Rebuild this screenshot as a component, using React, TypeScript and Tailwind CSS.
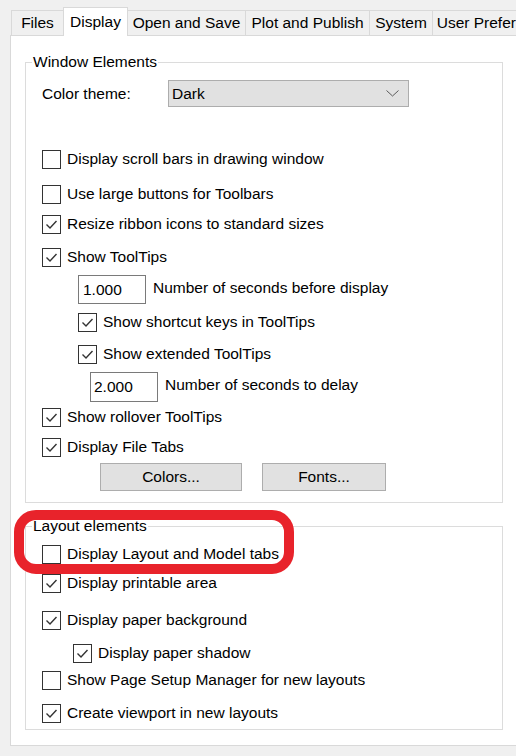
import React from 'react';

const Check: React.FC<{ checked?: boolean }> = ({ checked }) => (
  <div className="w-[19px] h-[19px] border border-[#333333] bg-white shrink-0 flex items-center justify-center">
    {checked && (
      <svg width="17" height="17" viewBox="0 0 17 17">
        <polyline points="3.5,8.5 7,12 13.5,5" fill="none" stroke="#333333" strokeWidth="1.4" />
      </svg>
    )}
  </div>
);

const Row: React.FC<{ checked?: boolean; label: string; className?: string }> = ({ checked, label, className = '' }) => (
  <div className={`h-[24px] flex items-center gap-[6px] ${className}`}>
    <Check checked={checked} />
    <span className="whitespace-nowrap">{label}</span>
  </div>
);

const tabs = [
  { name: 'Files', w: 'w-[53px]' },
  { name: 'Display', w: 'w-[65px]', active: true },
  { name: 'Open and Save', w: 'w-[119px]' },
  { name: 'Plot and Publish', w: 'w-[125px]' },
  { name: 'System', w: 'w-[64px]' },
  { name: 'User Preferences', w: 'w-[130px]' },
];

const App: React.FC = () => {
  return (
    <div className="relative w-[516px] h-[756px] overflow-hidden bg-[#f0f0f0] text-black text-[15.5px] font-['Liberation_Sans',Arial,sans-serif]">
      {/* tab strip */}
      <div className="h-[35px] flex items-end pl-[11px] relative z-10">
        {tabs.map((t, i) =>
          t.active ? (
            <div
              key={t.name}
              className={`${t.w} ${i > 0 ? '-ml-px' : ''} h-[29px] -mb-px bg-white border-t border-x border-[#d9d9d9] flex items-start justify-center pt-[2px] whitespace-nowrap shrink-0 relative z-10`}
            >
              {t.name}
            </div>
          ) : (
            <div
              key={t.name}
              className={`${t.w} ${i > 0 ? '-ml-px' : ''} h-[25px] bg-[#f0f0f0] border-t border-x border-[#d9d9d9] flex items-center justify-center whitespace-nowrap shrink-0`}
            >
              {t.name}
            </div>
          )
        )}
      </div>

      {/* panel */}
      <div className="ml-[10px] w-[540px] h-[711px] bg-white border border-[#d9d9d9] pt-[16px]">
        <fieldset className="ml-[14px] w-[478px] border border-[#dcdcdc] pb-[11px]">
          <legend className="ml-[6px] px-[1px] leading-[20px]">Window Elements</legend>
          <div className="pl-[16px]">
            <div className="mt-[8px] h-[27px] flex items-center">
              <span className="w-[126px]">Color theme:</span>
              <div className="w-[241px] h-[27px] bg-[#e1e1e1] border border-[#adadad] flex items-center justify-between pl-[3px] pr-[9px]">
                <span>Dark</span>
                <svg width="13" height="7" viewBox="0 0 13 7">
                  <polyline points="0.5,0.5 6.5,6 12.5,0.5" fill="none" stroke="#5a5a5a" strokeWidth="1" />
                </svg>
              </div>
            </div>
            <Row className="mt-[40px]" label="Display scroll bars in drawing window" />
            <Row className="mt-[11px]" label="Use large buttons for Toolbars" />
            <Row className="mt-[6px]" checked label="Resize ribbon icons to standard sizes" />
            <Row className="mt-[9px]" checked label="Show ToolTips" />
            <div className="mt-[6px] pl-[36px] flex items-center gap-[7px]">
              <div className="w-[68px] h-[29px] border border-[#7a7a7a] flex items-center pl-[4px]">1.000</div>
              <span className="whitespace-nowrap -mt-[4px]">Number of seconds before display</span>
            </div>
            <Row className="mt-[6px] pl-[36px] gap-[5px]" checked label="Show shortcut keys in ToolTips" />
            <Row className="mt-[8px] pl-[36px] gap-[5px]" checked label="Show extended ToolTips" />
            <div className="mt-[6px] pl-[48px] flex items-center gap-[7px]">
              <div className="w-[68px] h-[30px] border border-[#7a7a7a] flex items-center pl-[3px]">2.000</div>
              <span className="whitespace-nowrap -mt-[4px]">Number of seconds to delay</span>
            </div>
            <Row className="mt-[3px]" checked label="Show rollover ToolTips" />
            <Row className="mt-[6px]" checked label="Display File Tabs" />
            <div className="mt-[4px] pl-[58px] flex gap-[20px]">
              <div className="w-[142px] h-[28px] bg-[#e1e1e1] border border-[#adadad] flex items-center justify-center">Colors...</div>
              <div className="w-[124px] h-[28px] bg-[#e1e1e1] border border-[#adadad] flex items-center justify-center">Fonts...</div>
            </div>
          </div>
        </fieldset>

        <fieldset className="mt-[13px] ml-[14px] w-[478px] border border-[#dcdcdc] pb-[4px]">
          <legend className="ml-[6px] px-[1px] leading-[20px]">Layout elements</legend>
          <div className="pl-[16px]">
            <Row className="mt-[6px]" label="Display Layout and Model tabs" />
            <Row className="mt-[5px]" checked label="Display printable area" />
            <Row className="mt-[13px]" checked label="Display paper background" />
            <Row className="mt-[9px] pl-[31px] gap-[5px]" checked label="Display paper shadow" />
            <Row className="mt-[3px]" label="Show Page Setup Manager for new layouts" />
            <Row className="mt-[9px]" checked label="Create viewport in new layouts" />
          </div>
        </fieldset>
      </div>

      {/* red highlight */}
      <div className="absolute left-[14px] top-[510px] w-[280px] h-[64px] border-[10px] border-[#e8232b] rounded-[22px] pointer-events-none" />
    </div>
  );
};

export default App;
